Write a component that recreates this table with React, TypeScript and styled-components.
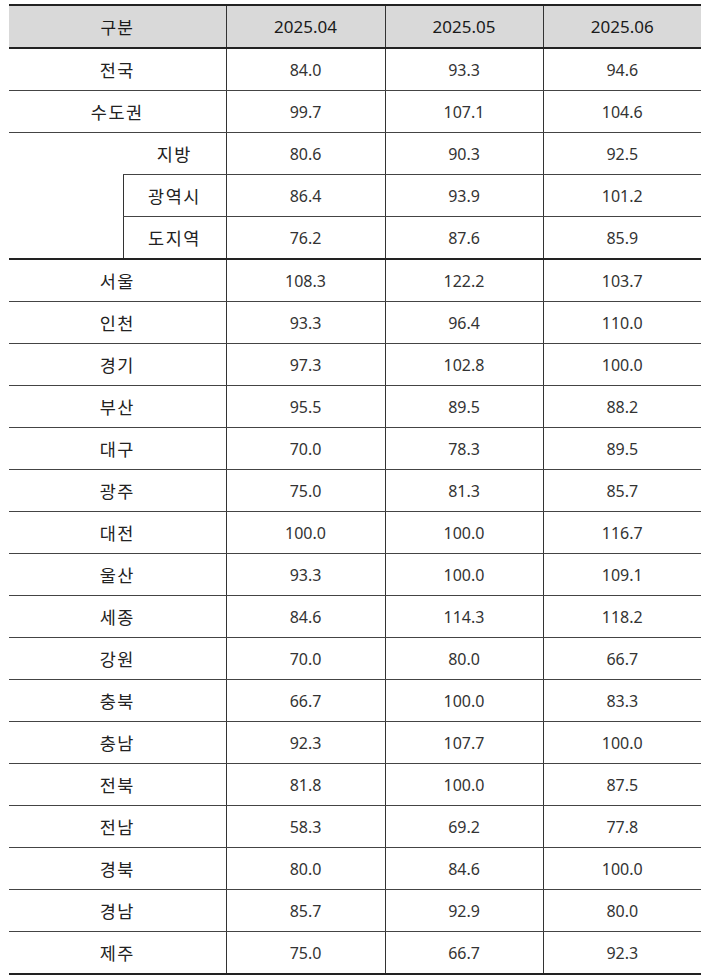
import React from "react";
import styled, { createGlobalStyle } from "styled-components";

const Global = createGlobalStyle`
  html, body { margin: 0; padding: 0; background: #fff; }
  body { font-family: "Noto Sans", "Noto Sans CJK KR", sans-serif; color: #222; }
`;

const Page = styled.div`
  padding: 4px 9px 0 9px;
`;

const Table = styled.table`
  border-collapse: collapse;
  table-layout: fixed;
  width: 692px;
  border-top: 2px solid #222;
  border-bottom: 2px solid #222;
`;

const HeadCell = styled.th`
  height: 41px;
  padding: 0;
  line-height: 20px;
  background: #d9d9d9;
  font-weight: 400;
  font-size: 17px;
  color: #1a1a1a;
  text-align: center;
  border-bottom: 2px solid #222;
  border-left: 1px solid #333;
  &:first-child { border-left: none; }
`;

const Row = styled.tr<{ $thick?: boolean }>`
  & > td { border-bottom: ${(p) => (p.$thick ? "2px solid #222" : "1px solid #444")}; }
`;

const NameCell = styled.td<{ $left?: boolean }>`
  height: 41px;
  padding: 0;
  line-height: 20px;
  text-align: center;
  font-family: "Noto Sans CJK KR", sans-serif;
  font-size: 17.5px;
  letter-spacing: 1.5px;
  color: #222;
  border-left: ${(p) => (p.$left ? "1px solid #333" : "none")};
`;

const BlankCell = styled.td`
  padding: 0;
  border-right: none;
`;

const NumCell = styled.td`
  height: 41px;
  padding: 0;
  line-height: 20px;
  text-align: center;
  font-size: 16px;
  color: #333;
  border-left: 1px solid #333;
`;

type R = [string, string, string, string];

const top: R[] = [
  ["전국", "84.0", "93.3", "94.6"],
  ["수도권", "99.7", "107.1", "104.6"],
];

const regions: R[] = [
  ["서울", "108.3", "122.2", "103.7"],
  ["인천", "93.3", "96.4", "110.0"],
  ["경기", "97.3", "102.8", "100.0"],
  ["부산", "95.5", "89.5", "88.2"],
  ["대구", "70.0", "78.3", "89.5"],
  ["광주", "75.0", "81.3", "85.7"],
  ["대전", "100.0", "100.0", "116.7"],
  ["울산", "93.3", "100.0", "109.1"],
  ["세종", "84.6", "114.3", "118.2"],
  ["강원", "70.0", "80.0", "66.7"],
  ["충북", "66.7", "100.0", "83.3"],
  ["충남", "92.3", "107.7", "100.0"],
  ["전북", "81.8", "100.0", "87.5"],
  ["전남", "58.3", "69.2", "77.8"],
  ["경북", "80.0", "84.6", "100.0"],
  ["경남", "85.7", "92.9", "80.0"],
  ["제주", "75.0", "66.7", "92.3"],
];

const Nums = ({ r }: { r: R }) => (
  <>
    <NumCell>{r[1]}</NumCell>
    <NumCell>{r[2]}</NumCell>
    <NumCell>{r[3]}</NumCell>
  </>
);

export default function App() {
  return (
    <>
      <Global />
      <Page>
        <Table>
          <colgroup>
            <col style={{ width: 114 }} />
            <col style={{ width: 103 }} />
            <col style={{ width: 159 }} />
            <col style={{ width: 158 }} />
            <col style={{ width: 158 }} />
          </colgroup>
          <thead>
            <tr>
              <HeadCell colSpan={2} style={{ fontFamily: '"Noto Sans CJK KR", sans-serif', letterSpacing: 1 }}>구분</HeadCell>
              <HeadCell>2025.04</HeadCell>
              <HeadCell>2025.05</HeadCell>
              <HeadCell>2025.06</HeadCell>
            </tr>
          </thead>
          <tbody>
            {top.map((r) => (
              <Row key={r[0]}>
                <NameCell colSpan={2}>{r[0]}</NameCell>
                <Nums r={r} />
              </Row>
            ))}
            <Row>
              <BlankCell rowSpan={3} style={{ borderBottom: "2px solid #222" }} />
              <NameCell>지방</NameCell>
              <Nums r={["지방", "80.6", "90.3", "92.5"]} />
            </Row>
            <Row>
              <NameCell $left>광역시</NameCell>
              <Nums r={["광역시", "86.4", "93.9", "101.2"]} />
            </Row>
            <Row $thick>
              <NameCell $left>도지역</NameCell>
              <Nums r={["도지역", "76.2", "87.6", "85.9"]} />
            </Row>
            {regions.map((r, i) => (
              <Row key={r[0]} $thick={i === regions.length - 1}>
                <NameCell colSpan={2}>{r[0]}</NameCell>
                <Nums r={r} />
              </Row>
            ))}
          </tbody>
        </Table>
      </Page>
    </>
  );
}
